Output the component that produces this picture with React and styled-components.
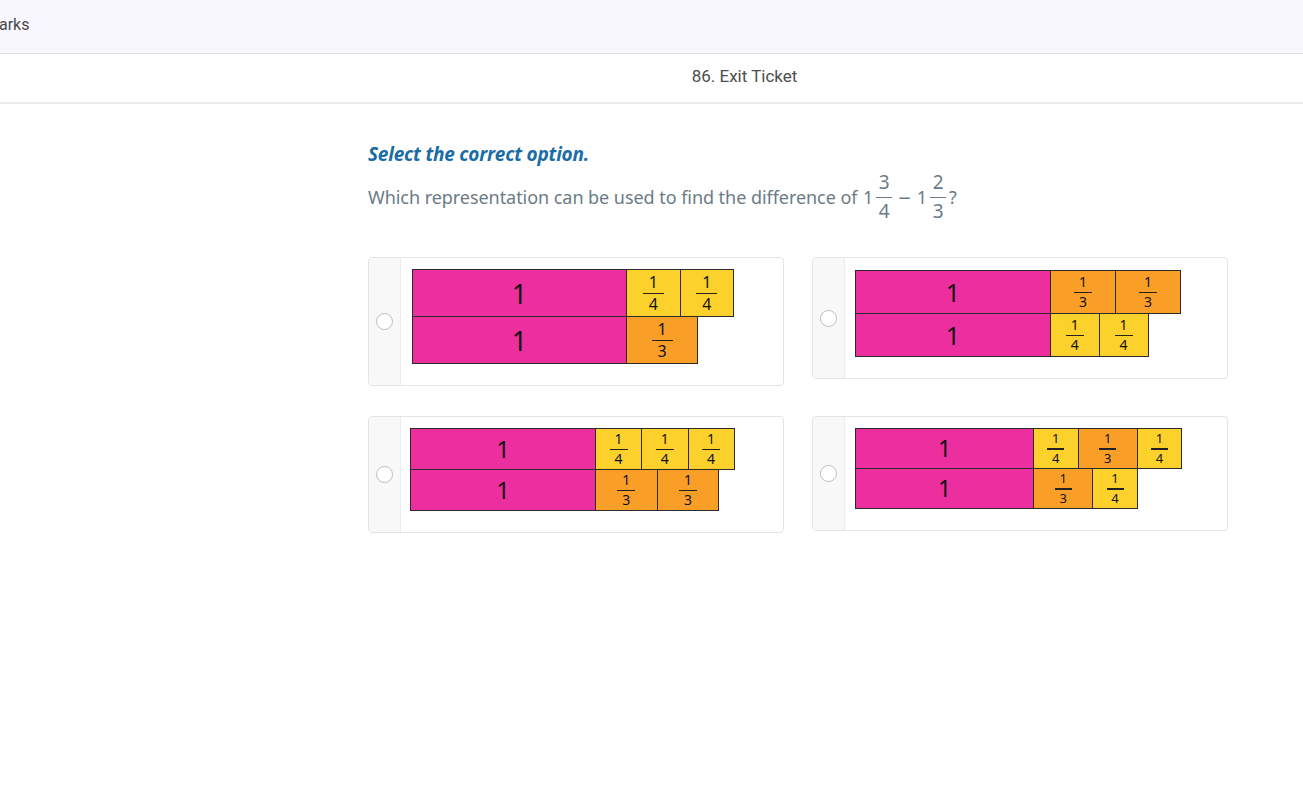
import React from "react";
import styled, { createGlobalStyle } from "styled-components";

const Global = createGlobalStyle`
  html, body { margin: 0; padding: 0; background: #fff; }
  body { font-family: "Open Sans", "Noto Sans", sans-serif; overflow: hidden; }
  * { box-sizing: border-box; }
`;

const Page = styled.div`
  width: 1303px;
  height: 799px;
  overflow: hidden;
  background: #fff;
`;

const TopBar = styled.div`
  height: 54px;
  background: #f9f7fe;
  border-bottom: 1px solid #e4def0;
  display: flex;
  align-items: center;
  overflow: hidden;
`;

const TopLabel = styled.span`
  font-family: Roboto, "Liberation Sans", sans-serif;
  font-size: 16px;
  color: #4a4a4a;
  margin-left: -15px;
  margin-top: -4px;
`;

const TitleBar = styled.div`
  height: 50px;
  border-bottom: 2px solid #ebebeb;
  display: flex;
  align-items: center;
  justify-content: center;
  padding-left: 186px;
`;

const Title = styled.span`
  font-family: Roboto, "Liberation Sans", sans-serif;
  font-size: 17px;
  color: #4d4d4d;
  margin-top: -4px;
`;

const Content = styled.div`
  padding: 37px 0 0 368px;
`;

const Instruction = styled.div`
  font-family: "Open Sans", "Noto Sans", sans-serif;
  font-weight: 700;
  font-style: italic;
  font-size: 19px;
  color: #1a6ca6;
  letter-spacing: -0.2px;
`;

const Question = styled.div`
  margin-top: 0;
  font-family: "Noto Sans", "Open Sans", sans-serif;
  font-size: 18px;
  color: #6b7b86;
  display: flex;
  align-items: center;
  height: 60px;
  letter-spacing: -0.05px;
`;

const Mixed = styled.span`
  display: inline-flex;
  align-items: center;
  margin: 0 1px;
`;

const Frac = styled.span`
  display: inline-flex;
  flex-direction: column;
  align-items: center;
  margin-left: 3px;
  font-size: ${(p) => p.$size || 16}px;
  line-height: 1.05;
`;

const FracLine = styled.span`
  display: block;
  width: ${(p) => p.$w || 14}px;
  height: 1px;
  background: ${(p) => p.$color || "currentColor"};
  margin: ${(p) => p.$gap || 4}px 0;
`;

const Minus = styled.span`
  margin: 0 5px;
  font-size: 22px;
  line-height: 1;
`;

const Grid = styled.div`
  margin-top: 30px;
  display: grid;
  grid-template-columns: 416px 416px;
  column-gap: 28px;
  row-gap: 30px;
  align-items: start;
`;

const Card = styled.div`
  border: 1px solid #e4e4e4;
  border-radius: 4px;
  display: flex;
  background: #fff;
  overflow: hidden;
`;

const RadioCol = styled.div`
  width: 32px;
  flex: none;
  background: #f8f8f8;
  border-right: 1px solid #ececec;
  display: flex;
  align-items: center;
  justify-content: center;
`;

const Radio = styled.span`
  width: 17px;
  height: 17px;
  border-radius: 50%;
  border: 1px solid #bdbdbd;
  background: #fff;
`;

const Body = styled.div`
  padding: ${(p) => p.$pt}px 11px 21px ${(p) => p.$pl}px;
`;

const Bars = styled.div`
  display: flex;
  flex-direction: column;
`;

const BarRow = styled.div`
  display: flex;
  & + & { margin-top: -1px; }
`;

const Cell = styled.div`
  border: 1px solid #2b2b2b;
  display: flex;
  align-items: center;
  justify-content: center;
  flex: none;
  background: ${(p) => p.$bg};
  color: #111;
  font-family: "Noto Sans", "Open Sans", sans-serif;
  & + & { margin-left: -1px; }
`;

const Whole = styled.span`
  font-size: ${(p) => p.$size}px;
  line-height: 1;
`;

const CellFrac = styled.span`
  display: inline-flex;
  flex-direction: column;
  align-items: center;
  font-size: ${(p) => p.$size}px;
  line-height: 1;
`;

const CellLine = styled.span`
  display: block;
  width: ${(p) => p.$w}px;
  height: 1.5px;
  background: #222;
  margin: 3px 0 2px;
`;

const COLORS = { 1: "#ec2e9e", 4: "#fdd12b", 3: "#f99f27" };

function Piece({ d, whole, h }) {
  const w = d === 1 ? whole : whole / d;
  const fs = Math.round(h * 0.33);
  return (
    <Cell $bg={COLORS[d]} style={{ width: w + 1, height: h + 1 }}>
      {d === 1 ? (
        <Whole $size={Math.round(h * 0.58)}>1</Whole>
      ) : (
        <CellFrac $size={fs}>
          <span>1</span>
          <CellLine $w={Math.round(fs * 1.3)} />
          <span>{d}</span>
        </CellFrac>
      )}
    </Cell>
  );
}

const OPTIONS = [
  { whole: 214, h: 47, pt: 11, pl: 11, rows: [[1, 4, 4], [1, 3]] },
  { whole: 195, h: 43, pt: 12, pl: 10, rows: [[1, 3, 3], [1, 4, 4]] },
  { whole: 185, h: 41, pt: 11, pl: 9, rows: [[1, 4, 4, 4], [1, 3, 3]] },
  { whole: 178, h: 40, pt: 11, pl: 10, rows: [[1, 4, 3, 4], [1, 3, 4]] },
];

function Option({ o }) {
  return (
    <Card>
      <RadioCol>
        <Radio />
      </RadioCol>
      <Body $pt={o.pt} $pl={o.pl}>
        <Bars>
          {o.rows.map((r, i) => (
            <BarRow key={i}>
              {r.map((d, j) => (
                <Piece key={j} d={d} whole={o.whole} h={o.h} />
              ))}
            </BarRow>
          ))}
        </Bars>
      </Body>
    </Card>
  );
}

function Mix({ w, n, d }) {
  return (
    <Mixed>
      {w}
      <Frac $size={19}>
        <span>{n}</span>
        <FracLine $w={16} $gap={4} />
        <span>{d}</span>
      </Frac>
    </Mixed>
  );
}

export default function App() {
  return (
    <Page>
      <Global />
      <TopBar>
        <TopLabel>Marks</TopLabel>
      </TopBar>
      <TitleBar>
        <Title>86. Exit Ticket</Title>
      </TitleBar>
      <Content>
        <Instruction>Select the correct option.</Instruction>
        <Question>
          Which representation can be used to find the difference of&nbsp;
          <Mix w="1" n="3" d="4" />
          <Minus>−</Minus>
          <Mix w="1" n="2" d="3" />
          <span style={{ marginLeft: 2 }}>?</span>
        </Question>
        <Grid>
          {OPTIONS.map((o, i) => (
            <Option key={i} o={o} />
          ))}
        </Grid>
      </Content>
    </Page>
  );
}
